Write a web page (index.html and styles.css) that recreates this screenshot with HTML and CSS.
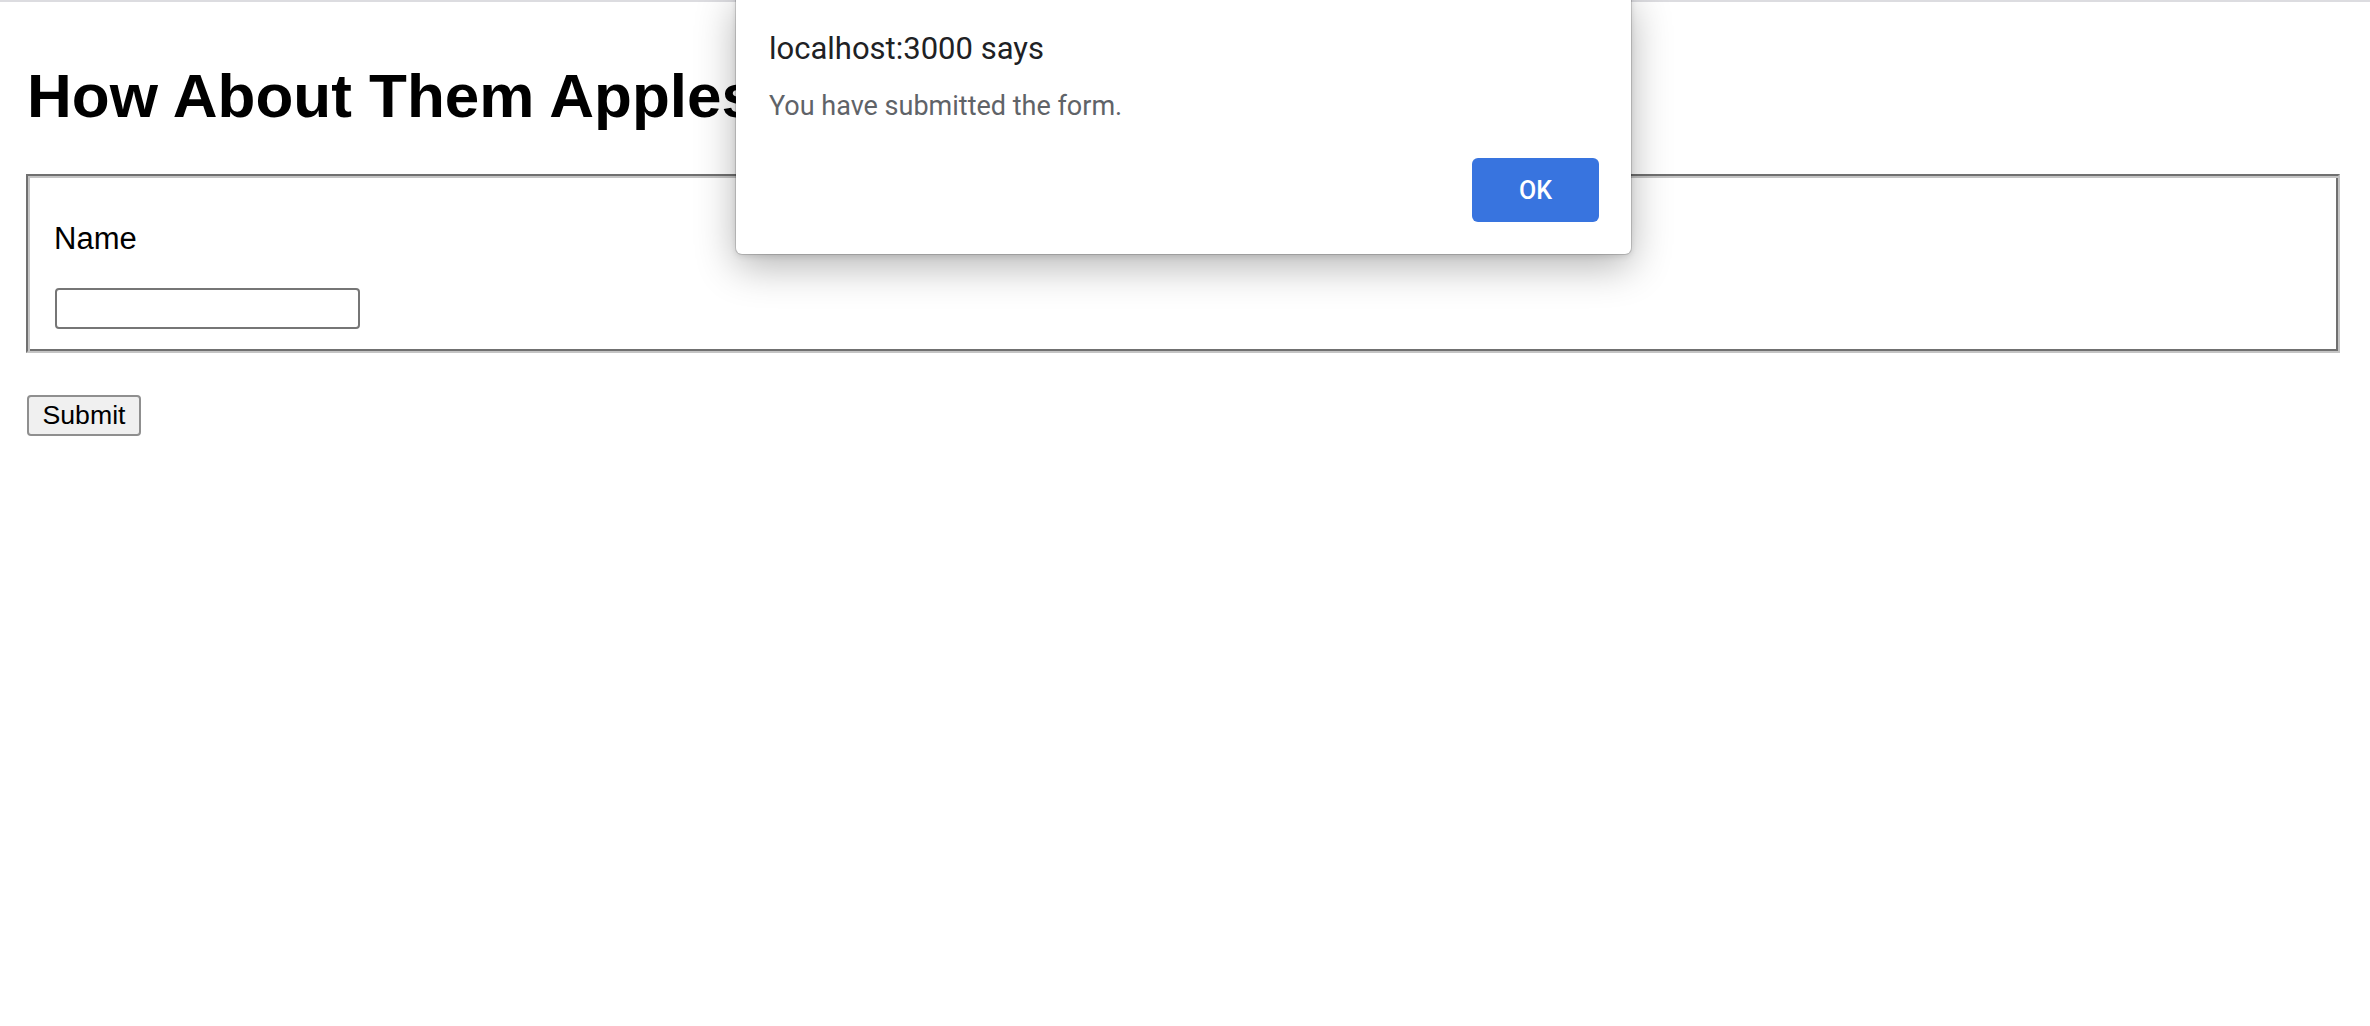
FILE: index.html
```html
<!DOCTYPE html>
<html lang="en">
<head>
<meta charset="utf-8">
<title>How About Them Apples</title>
<link rel="stylesheet" href="styles.css">
</head>
<body>
<div class="topline"></div>
<main class="page">
  <h1 class="title">How About Them Apples</h1>
  <form class="form">
    <fieldset class="group">
      <label class="label" for="name">Name</label>
      <input class="field" id="name" type="text">
    </fieldset>
    <button class="submit" type="button">Submit</button>
  </form>
</main>
<div class="dialog" role="alertdialog">
  <div class="dialog-title">localhost:3000 says</div>
  <div class="dialog-msg">You have submitted the form.</div>
  <div class="dialog-actions">
    <button class="dialog-ok" type="button">OK</button>
  </div>
</div>
</body>
</html>
```

FILE: styles.css
```css
html, body {
  margin: 0;
  padding: 0;
  background: #ffffff;
}

body {
  position: relative;
  width: 2370px;
  height: 1026px;
  overflow: hidden;
  font-family: "Liberation Sans", Arial, sans-serif;
  color: #000;
}

.topline {
  height: 2px;
  background: #dcdce0;
}

.page {
  padding: 0 30px 0 26px;
}

.title {
  margin: 62px 0 0 1px;
  font-size: 62px;
  line-height: 63px;
  font-weight: 700;
  white-space: nowrap;
}

.form {
  margin-top: 47px;
}

.group {
  margin: 0;
  min-width: 0;
  box-sizing: border-box;
  height: 179px;
  padding: 47px 25px 0 26px;
  border: 2px solid;
  border-color: #707070 #c4c4c4 #c4c4c4 #707070;
  box-shadow: inset 2px 2px 0 #c4c4c4, inset -2px -2px 0 #707070;
  display: flex;
  flex-direction: column;
  align-items: flex-start;
}

.label {
  display: block;
  font-size: 31px;
  line-height: 32px;
}

.field {
  margin: 33px 0 0 1px;
  box-sizing: border-box;
  width: 305px;
  height: 41px;
  border: 2px solid #767676;
  border-radius: 4px;
  padding: 0 4px;
  background: #fff;
  font: 26px "Liberation Sans", Arial, sans-serif;
}

.submit {
  display: block;
  margin: 42px 0 0 1px;
  box-sizing: border-box;
  width: 114px;
  height: 41px;
  padding: 0;
  border: 2px solid #8f8f8f;
  border-radius: 4px;
  background: #f0f0f0;
  color: #000;
  font: 26.67px "Liberation Sans", Arial, sans-serif;
  line-height: 37px;
}

.dialog {
  position: absolute;
  left: 736px;
  top: -8px;
  width: 895px;
  height: 262px;
  box-sizing: border-box;
  padding: 41px 32px 32px 33px;
  background: #fff;
  border-radius: 6px;
  box-shadow: 0 0 0 1px rgba(0, 0, 0, 0.14), 0 12px 40px rgba(0, 0, 0, 0.3), 0 2px 6px rgba(0, 0, 0, 0.12);
  font-family: Roboto, "Liberation Sans", Arial, sans-serif;
  display: flex;
  flex-direction: column;
}

.dialog-title {
  font-size: 31px;
  line-height: 31px;
  color: #202124;
}

.dialog-msg {
  margin-top: 28px;
  font-size: 27px;
  line-height: 28px;
  color: #5f6368;
}

.dialog-actions {
  margin-top: auto;
  display: flex;
  justify-content: flex-end;
}

.dialog-ok {
  width: 127px;
  height: 64px;
  border: none;
  border-radius: 6px;
  background: #3874df;
  color: #fff;
  font: 500 25px Roboto, "Liberation Sans", Arial, sans-serif;
  padding: 0;
}
```
